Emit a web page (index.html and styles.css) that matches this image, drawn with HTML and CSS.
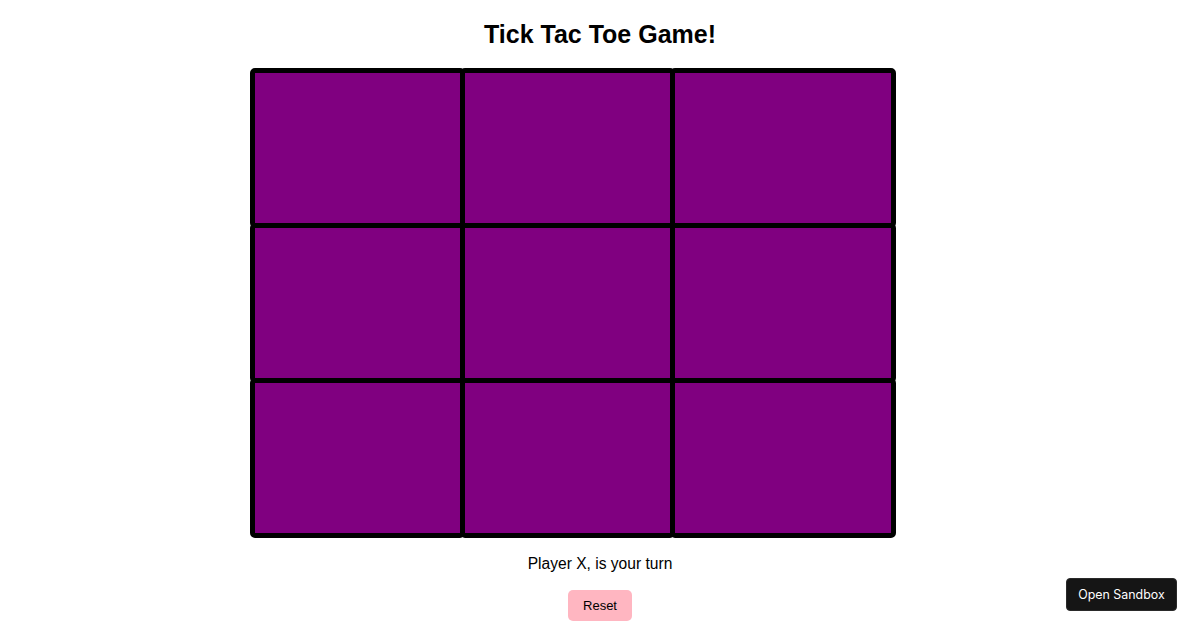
FILE: index.html
```html
<!DOCTYPE html>
<html>
<head>
<meta charset="utf-8">
<link rel="stylesheet" href="styles.css">
</head>
<body>
<div class="app">
  <h1 class="title">Tick Tac Toe Game!</h1>
  <div class="board">
    <div class="row">
      <div class="cell c1"></div><div class="cell c2"></div><div class="cell c3"></div>
    </div>
    <div class="row">
      <div class="cell c1"></div><div class="cell c2"></div><div class="cell c3"></div>
    </div>
    <div class="row">
      <div class="cell c1"></div><div class="cell c2"></div><div class="cell c3"></div>
    </div>
  </div>
  <p class="status">Player X, is your turn</p>
  <button class="reset">Reset</button>
</div>
<a class="sandbox">Open Sandbox</a>
</body>
</html>
```
FILE: styles.css
```css
html, body {
  margin: 0;
  padding: 0;
  background: #ffffff;
  font-family: "Liberation Sans", Arial, sans-serif;
  color: #000;
}
.app {
  display: flex;
  flex-direction: column;
  align-items: center;
  padding-top: 20px;
}
.title {
  margin: 0;
  font-size: 25px;
  line-height: 28px;
  font-weight: bold;
}
.board {
  margin-top: 20px;
  margin-left: -55px;
  display: flex;
  flex-direction: column;
}
.row {
  display: flex;
}
.row + .row {
  margin-top: -5px;
}
.cell {
  box-sizing: border-box;
  height: 160px;
  border: 5px solid #000;
  border-radius: 5px;
  background: #800080;
}
.c1 { width: 215px; }
.c2 { width: 215px; margin-left: -5px; }
.c3 { width: 226px; margin-left: -5px; }
.status {
  margin: 16px 0 0;
  font-size: 15.6px;
  line-height: 20px;
}
.reset {
  margin-top: 16px;
  width: 64px;
  height: 31px;
  border: none;
  border-radius: 5px;
  background: #ffb6c1;
  font-family: "Liberation Sans", Arial, sans-serif;
  font-size: 13px;
  color: #000;
  padding: 0;
}
.sandbox {
  position: fixed;
  right: 23px;
  bottom: 19px;
  width: 111px;
  height: 33px;
  box-sizing: border-box;
  display: flex;
  align-items: center;
  justify-content: center;
  background: #151515;
  border: 1px solid #2a2a2a;
  border-radius: 4px;
  color: #fff;
  font-family: Inter, "Liberation Sans", sans-serif;
  font-size: 12.4px;
}
```
